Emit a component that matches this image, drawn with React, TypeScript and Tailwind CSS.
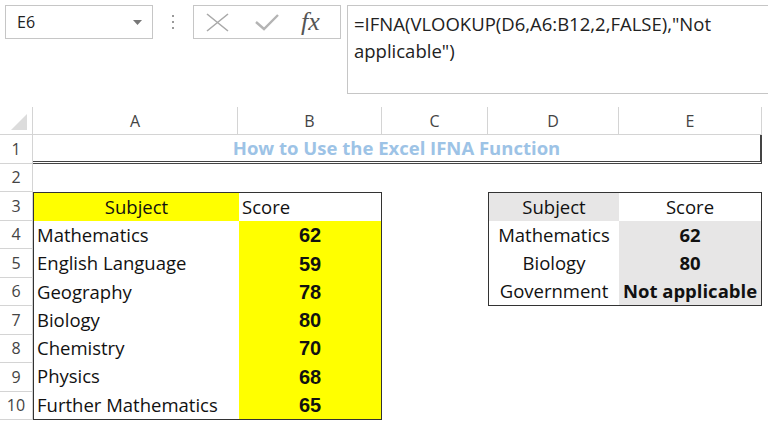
const font = { fontFamily: '"Open Sans", "Liberation Sans", sans-serif' };

const cols = ['A', 'B', 'C', 'D', 'E'];

const subjects = [
  { name: 'Mathematics', score: 62 },
  { name: 'English Language', score: 59 },
  { name: 'Geography', score: 78 },
  { name: 'Biology', score: 80 },
  { name: 'Chemistry', score: 70 },
  { name: 'Physics', score: 68 },
  { name: 'Further Mathematics', score: 65 },
];

const lookups = [
  { name: 'Mathematics', score: '62' },
  { name: 'Biology', score: '80' },
  { name: 'Government', score: 'Not applicable' },
];

function Toolbar() {
  return (
    <div className="flex h-[107px] items-start pt-[5px]">
      {/* name box */}
      <div className="ml-[5px] flex h-[34px] w-[148px] items-center justify-between border border-[#c6c6c6] pl-[11px] pr-[10px]">
        <span className="text-[16px] text-[#222]">E6</span>
        <svg width="9" height="5" viewBox="0 0 9 5">
          <path d="M0 0 L9 0 L4.5 5 Z" fill="#777" />
        </svg>
      </div>
      {/* separator dots */}
      <div className="mx-[19px] flex h-[34px] flex-col items-center justify-center gap-[4px]">
        <div className="h-[2px] w-[2px] bg-[#9a9a9a]" />
        <div className="h-[2px] w-[2px] bg-[#9a9a9a]" />
        <div className="h-[2px] w-[2px] bg-[#9a9a9a]" />
      </div>
      {/* cancel / enter / fx */}
      <div className="flex h-[34px] w-[148px] items-center border border-[#c6c6c6]">
        <svg className="ml-[12px]" width="23" height="19" viewBox="0 0 23 19">
          <path d="M1 1 L22 18 M22 1 L1 18" stroke="#a9a9a9" strokeWidth="1.6" fill="none" />
        </svg>
        <svg className="ml-[26px]" width="24" height="18" viewBox="0 0 24 18">
          <path d="M1 9 L9 16 L23 2" stroke="#b4b4b4" strokeWidth="2.4" fill="none" />
        </svg>
        <span
          className="ml-[22px] text-[26px] italic leading-none text-[#555]"
          style={{ fontFamily: '"Liberation Serif", "DejaVu Serif", serif' }}
        >
          fx
        </span>
      </div>
      {/* formula text */}
      <div className="ml-[6px] h-[89px] flex-1 border border-r-0 border-[#c6c6c6] px-[6px] pt-[4px] text-[18.5px] leading-[27px] text-[#222]">
        =IFNA(VLOOKUP(D6,A6:B12,2,FALSE),"Not
        <br />
        applicable")
      </div>
    </div>
  );
}

export default function App() {
  return (
    <div className="h-[428px] w-[768px] overflow-hidden bg-white" style={font}>
      <Toolbar />
      <div className="grid grid-cols-[33px_205px_144px_106px_131px_143px] grid-rows-[28px_repeat(10,28.5px)]">
        {/* corner */}
        <div className="relative border-b border-r border-[#d4d4d4]">
          <svg className="absolute bottom-[4px] right-[5px]" width="16" height="16" viewBox="0 0 16 16">
            <path d="M16 0 L16 16 L0 16 Z" fill="#dcdcdc" />
          </svg>
        </div>
        {cols.map((c) => (
          <div
            key={c}
            className="flex items-center justify-center border-b border-r border-[#d4d4d4] text-[16px] text-[#444]"
          >
            {c}
          </div>
        ))}

        {/* row headers */}
        {Array.from({ length: 10 }, (_, i) => (
          <div
            key={i}
            className="col-start-1 flex items-center justify-center border-b border-r border-[#d4d4d4] text-[16px] text-[#444]"
            style={{ gridRowStart: i + 2 }}
          >
            {i + 1}
          </div>
        ))}

        {/* title row */}
        <div className="col-span-5 col-start-2 row-start-2 flex items-center justify-center border-b-[3px] border-r-2 border-double border-b-[#444] border-r-[#444] text-[18.5px] font-bold leading-none text-[#9dc3e6]">
          How to Use the Excel IFNA Function
        </div>

        {/* left table */}
        <div className="col-span-2 col-start-2 row-span-8 row-start-4 grid min-h-0 grid-cols-[205px_1fr] grid-rows-[repeat(8,minmax(0,1fr))] border border-[#333] text-[18.5px] leading-none text-[#111]">
          <div className="flex items-center justify-center bg-[#ffff00]">Subject</div>
          <div className="flex items-center pl-[3px]">Score</div>
          {subjects.map((s) => (
            <div key={s.name} className="contents">
              <div className="flex items-center pl-[3px]">{s.name}</div>
              <div
                className="flex items-center justify-center bg-[#ffff00] text-[20px] font-bold"
                style={{ fontFamily: '"Liberation Sans", Arial, sans-serif' }}
              >
                {s.score}
              </div>
            </div>
          ))}
        </div>

        {/* right table */}
        <div className="col-span-2 col-start-5 row-span-4 row-start-4 grid min-h-0 grid-cols-[130px_1fr] grid-rows-[repeat(4,minmax(0,1fr))] border border-[#333] text-[18.5px] leading-none text-[#111]">
          <div className="flex items-center justify-center bg-[#e7e6e6]">Subject</div>
          <div className="flex items-center justify-center">Score</div>
          {lookups.map((s) => (
            <div key={s.name} className="contents">
              <div className="flex items-center justify-center">{s.name}</div>
              <div className="flex items-center justify-center whitespace-nowrap bg-[#e7e6e6] font-bold">
                {s.score}
              </div>
            </div>
          ))}
        </div>
      </div>
    </div>
  );
}
